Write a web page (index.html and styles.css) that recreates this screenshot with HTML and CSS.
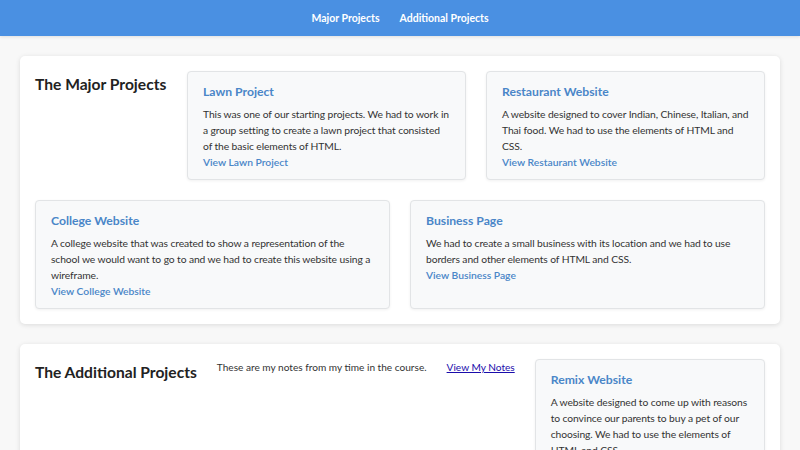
FILE: index.html
```html
<!DOCTYPE html>
<html lang="en">
<head>
<meta charset="utf-8">
<title>Projects</title>
<link rel="stylesheet" href="styles.css">
</head>
<body>
<header class="topbar">
  <nav class="nav">
    <a href="#major">Major Projects</a>
    <a href="#additional">Additional Projects</a>
  </nav>
</header>
<main class="page">
  <section class="panel" id="major">
    <h2 class="panel-title">The Major Projects</h2>
    <article class="card">
      <h3 class="card-title">Lawn Project</h3>
      <p class="card-text">This was one of our starting projects. We had to work in a group setting to create a lawn project that consisted of the basic elements of HTML.</p>
      <a class="card-link" href="#">View Lawn Project</a>
    </article>
    <article class="card">
      <h3 class="card-title">Restaurant Website</h3>
      <p class="card-text">A website designed to cover Indian, Chinese, Italian, and Thai food. We had to use the elements of HTML and CSS.</p>
      <a class="card-link" href="#">View Restaurant Website</a>
    </article>
    <article class="card">
      <h3 class="card-title">College Website</h3>
      <p class="card-text">A college website that was created to show a representation of the school we would want to go to and we had to create this website using a wireframe.</p>
      <a class="card-link" href="#">View College Website</a>
    </article>
    <article class="card">
      <h3 class="card-title">Business Page</h3>
      <p class="card-text">We had to create a small business with its location and we had to use borders and other elements of HTML and CSS.</p>
      <a class="card-link" href="#">View Business Page</a>
    </article>
  </section>
  <section class="panel panel-additional" id="additional">
    <h2 class="panel-title">The Additional Projects</h2>
    <p class="notes">These are my notes from my time in the course.</p>
    <a class="notes-link" href="#">View My Notes</a>
    <article class="card card-wide">
      <h3 class="card-title">Remix Website</h3>
      <p class="card-text">A website designed to come up with reasons to convince our parents to buy a pet of our choosing. We had to use the elements of HTML and CSS.</p>
      <a class="card-link" href="#">View Remix Website</a>
    </article>
  </section>
</main>
</body>
</html>
```
FILE: styles.css
```css
* { box-sizing: border-box; }
body {
  margin: 0;
  background: #f8f8f8;
  font-family: Lato, "Noto Sans", sans-serif;
  color: #333;
  font-size: 10.3px;
}
.topbar {
  height: 36px;
  background: #4a90e2;
  display: flex;
  align-items: center;
  justify-content: center;
  box-shadow: 0 1px 3px rgba(0,0,0,0.1);
}
.nav { display: flex; gap: 20px; }
.nav a {
  color: #fff;
  text-decoration: none;
  font-weight: 700;
  font-size: 10.5px;
}
.page { padding: 20px 20px 0; display: flex; flex-direction: column; gap: 20px; }
.panel {
  background: #fff;
  border-radius: 5px;
  box-shadow: 0 1px 5px rgba(0,0,0,0.12);
  padding: 15px;
  display: flex;
  flex-wrap: wrap;
  gap: 20px;
}
.panel-title {
  margin: 0;
  font-size: 15.6px;
  line-height: 26px;
  font-weight: 700;
  color: #222;
  flex: 0 0 132px;
  white-space: nowrap;
}
.card {
  flex: 1 1 200px;
  background: #f8f9fa;
  border: 1px solid #e2e4e6;
  border-radius: 4px;
  box-shadow: 0 1px 3px rgba(0,0,0,0.06);
  padding: 10px 15px 9px;
}
.card-title {
  margin: 0 0 4px;
  font-size: 12.2px;
  line-height: 20px;
  font-weight: 700;
  color: #4a86c8;
}
.card-text { margin: 0; line-height: 16px; letter-spacing: -0.1px; }
.card-link {
  display: block;
  line-height: 16px;
  color: #4a86c8;
  text-decoration: none;
  font-weight: 600;
}
.panel-additional { flex-wrap: nowrap; align-items: flex-start; }
.panel-additional .panel-title { flex: 0 0 auto; }
.notes { margin: 0; line-height: 16px; white-space: nowrap; font-size: 10.1px; }
.notes-link { line-height: 16px; color: #1a0dab; white-space: nowrap; font-size: 10.1px; }
.card-wide { flex: 1 1 auto; }
```
